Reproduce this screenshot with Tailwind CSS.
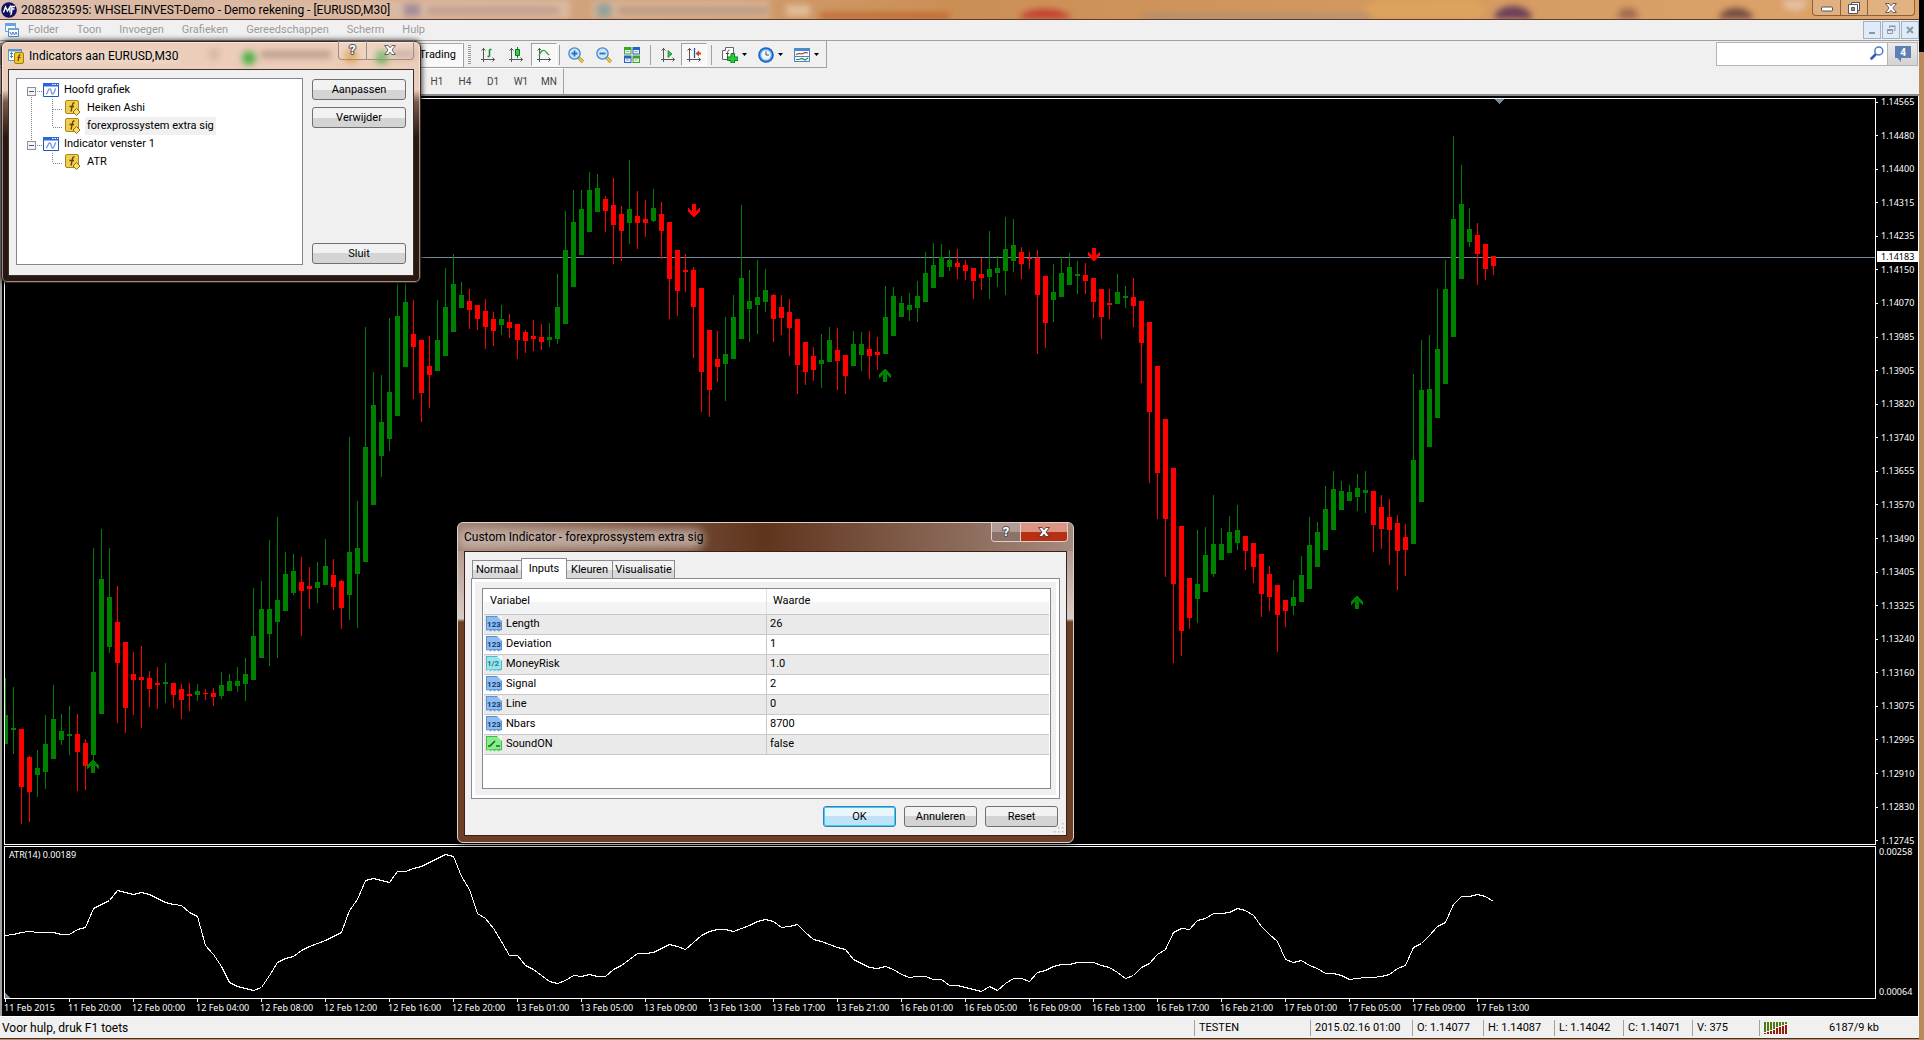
<!DOCTYPE html>
<html lang="nl">
<head>
    <meta charset="UTF-8">
    <meta name="viewport" content="width=device-width, initial-scale=1.0">
    <title>2088523595: WHSELFINVEST-Demo - Demo rekening - [EURUSD,M30]</title>
    <script src="https://cdn.jsdelivr.net/npm/@tailwindcss/browser@4"></script>
</head>
<body class="relative h-screen overflow-hidden flex bg-[#b98a5c] font-['Roboto',sans-serif] text-[11px] leading-4 text-black">

    <!-- Main window -->
    <div class="flex-1 min-w-0 flex flex-col bg-[#f0f0f0]">

        <!-- Title bar -->
        <header class="relative h-5 shrink-0 flex items-center justify-between overflow-hidden border-b border-[#5e3a30] bg-linear-to-r from-[#dcc0b0] via-[#cb8f55] to-[#dda56c]">
            <svg class="absolute inset-0 w-full h-full blur-[3px]" aria-hidden="true">
                <rect x="200" y="-2" width="370" height="26" fill="#dbb9a3" />
                <rect x="592" y="-2" width="178" height="26" fill="#d8b496" />
                <rect x="404" y="4" width="16" height="12" fill="#a08c98" />
                <rect x="427" y="7" width="132" height="7" fill="#c09c8a" />
                <rect x="597" y="4" width="14" height="13" fill="#8fa09c" />
                <rect x="618" y="7" width="150" height="7" fill="#bb9880" />
                <rect x="786" y="5" width="24" height="11" fill="#e2bd98" />
                <rect x="820" y="13" width="130" height="8" fill="#c0662c" />
                <ellipse cx="1045" cy="20" rx="26" ry="11" fill="#c33f30" />
                <rect x="1142" y="15" width="230" height="8" fill="#a58c7c" />
                <ellipse cx="1425" cy="10" rx="60" ry="16" fill="#e2aa5c" opacity=".6" />
                <ellipse cx="1513" cy="19" rx="19" ry="13" fill="#6a3f58" />
                <ellipse cx="1628" cy="16" rx="10" ry="8" fill="#a06a50" />
                <ellipse cx="1736" cy="19" rx="17" ry="11" fill="#744c44" />
                <ellipse cx="1795" cy="2" rx="12" ry="9" fill="#e6c0a6" />
            </svg>
            <div class="relative flex items-center gap-1 pl-px">
                <svg class="size-4" viewBox="0 0 16 16">
                    <circle cx="8" cy="8" r="7.8" fill="#10105e" />
                    <path d="M2.5 10.5L4.5 5l2 4 2.500-4v5.500M9.500 4.500h4.500M11 7h2.500M11 4.500c-.5 3 .5 6-1.500 8.500" fill="none" stroke="#fff" stroke-width="1.400" />
                </svg>
                <h1 class="text-[12px] leading-4">2088523595: WHSELFINVEST-Demo - Demo rekening - [EURUSD,M30]</h1>
            </div>
            <div class="relative flex self-start mr-1 h-4 rounded-b border border-t-0 border-[#8f6038] bg-white/15 divide-x divide-[#8f6038]">
                <button type="button" aria-label="Minimaliseren" class="w-7 flex items-center justify-center">
                    <svg class="w-3 h-3" viewBox="0 0 12 12"><rect x=".5" y="5" width="11" height="4" rx="1" fill="#fff" stroke="#54545c" /></svg>
                </button>
                <button type="button" aria-label="Vorig formaat" class="w-[27px] flex items-center justify-center">
                    <svg class="w-3 h-3" viewBox="0 0 12 12"><path d="M3.500 .5h8v8h-8z" fill="#fff" stroke="#54545c" /><path d="M.5 2.500h9v9h-9z" fill="#fff" stroke="#54545c" /><path d="M3.500 5.500h3v3h-3z" fill="#c98f5c" stroke="#54545c" /></svg>
                </button>
                <button type="button" aria-label="Sluiten" class="w-[46px] flex items-center justify-center">
                    <svg class="w-3 h-3" viewBox="0 0 12 12"><path d="M.6 1.500h3.600L6 3.800l1.800-2.300h3.600L8 6l3.400 4.500H7.800L6 8.200l-1.800 2.300H.6L4 6z" fill="#fff" stroke="#54545c" stroke-width=".9" /></svg>
                </button>
            </div>
        </header>

        <!-- Menu bar -->
        <nav class="h-[21px] shrink-0 flex items-center justify-between border-b border-[#a0a0a0] text-[#9a9a9a]">
            <div class="flex items-center gap-[18px] pl-[5px]">
                <svg class="w-3.5 h-3.5 -mr-[9px]" viewBox="0 0 14 14">
                    <path d="M.5 .5h10v8h-10z" fill="#fff" stroke="#6aa2dc" /><path d="M0 0h11v3H0z" fill="#6aa2dc" />
                    <path d="M3.500 5.500h10v8h-10z" fill="#fff" stroke="#4a8cd4" /><path d="M3 5h11v2H3z" fill="#6aa2dc" />
                    <path d="M5 9l1.500 3L8 9l1.500 3L11 9l1 2.500" fill="none" stroke="#4a78c8" />
                </svg>
                <a href="#">Folder</a>
                <a href="#">Toon</a>
                <a href="#">Invoegen</a>
                <a href="#">Grafieken</a>
                <a href="#">Gereedschappen</a>
                <a href="#">Scherm</a>
                <a href="#">Hulp</a>
            </div>
            <div class="flex gap-px">
                <button type="button" aria-label="Venster minimaliseren" class="size-[18px] flex items-center justify-center border border-[#9fb1c4] bg-[#dfebf7]">
                    <svg class="size-3" viewBox="0 0 12 12"><path d="M3 9h6" stroke="#8b98a8" stroke-width="2" /></svg>
                </button>
                <button type="button" aria-label="Venster herstellen" class="size-[18px] flex items-center justify-center border border-[#9fb1c4] bg-[#dfebf7]">
                    <svg class="size-3" viewBox="0 0 12 12" fill="none" stroke="#8b98a8"><path d="M2.500 6.500h5v3h-5zM2 5.500h6M4.500 4V2.500h5.500v4H8.500M4 2h6.500" /></svg>
                </button>
                <button type="button" aria-label="Venster sluiten" class="size-[18px] flex items-center justify-center border border-[#9fb1c4] bg-[#dfebf7]">
                    <svg class="size-3" viewBox="0 0 12 12"><path d="M3 3l6 6M9 3l-6 6" stroke="#8b98a8" stroke-width="2" /></svg>
                </button>
            </div>
        </nav>

        <!-- Toolbars -->
        <div class="shrink-0 flex justify-between items-start border-b-2 border-[#8c8c8c]">
            <div class="flex flex-col items-start">
                <div class="h-[27px] pt-px flex items-center border-r border-b border-[#a0a0a0] pr-0.5">
                    <button type="button" class="w-[463px] h-[23px] border border-[#a8a8a8] border-b-white border-r-white bg-[#f8f8f8] text-right pr-1.5">AutoTrading</button>
                    <span class="w-px h-6 bg-[#a0a0a0]"></span>
                    <span class="ml-1 w-[3px] h-5 bg-[repeating-linear-gradient(#9a9a9a_0_1px,#f0f0f0_1px_2px)]"></span>
                    <button type="button" aria-label="Staafgrafiek" class="ml-1 size-[26px] flex items-center justify-center">
                        <svg class="size-4" viewBox="0 0 16 16" fill="none"><path d="M3.500 1v14M1 12.500h14M1.500 3.500l2-2 2 2M12.500 10.500l2 2-2 2" stroke="#555" /><path d="M7.500 9.500h2M9.500 9.500v-7M9.500 2.500h2" stroke="#12902c" stroke-width="1.500" /></svg>
                    </button>
                    <button type="button" aria-label="Kaarsgrafiek" class="size-[26px] ml-0.5 flex items-center justify-center">
                        <svg class="size-4" viewBox="0 0 16 16" fill="none"><path d="M3.500 1v14M1 12.500h14M1.500 3.500l2-2 2 2M12.500 10.500l2 2-2 2" stroke="#555" /><path d="M9.500 0v11" stroke="#0b7a20" /><path d="M7.500 2.500h4v6h-4z" fill="#2fd048" stroke="#0b7a20" /></svg>
                    </button>
                    <button type="button" aria-label="Lijngrafiek" class="w-[26px] h-[23px] ml-0.5 flex items-center justify-center border border-[#a0a0a0] border-r-white border-b-white bg-[#f8f8f8]">
                        <svg class="size-4" viewBox="0 0 16 16" fill="none"><path d="M3.500 1v14M1 12.500h14M1.500 3.500l2-2 2 2M12.500 10.500l2 2-2 2" stroke="#555" /><path d="M3 9c2-6 5-7 7-4l3 3" stroke="#2fa33c" stroke-width="1.200" /></svg>
                    </button>
                    <span class="mx-0.5 w-px h-5 bg-[#a0a0a0]"></span>
                    <button type="button" aria-label="Inzoomen" class="w-7 h-[26px] flex items-center justify-center">
                        <svg class="size-4" viewBox="0 0 16 16" fill="none"><path d="M10 10l5 5" stroke="#b98b14" stroke-width="3.200" /><path d="M10 10l5 5" stroke="#f4d552" stroke-width="1.600" /><circle cx="6.500" cy="6.500" r="5.600" fill="#cbe6fa" stroke="#3f86cc" stroke-width="1.300" /><path d="M3.500 6.500h6M6.500 3.500v6" stroke="#2f6fb8" stroke-width="1.800" /></svg>
                    </button>
                    <button type="button" aria-label="Uitzoomen" class="w-7 h-[26px] flex items-center justify-center">
                        <svg class="size-4" viewBox="0 0 16 16" fill="none"><path d="M10 10l5 5" stroke="#b98b14" stroke-width="3.200" /><path d="M10 10l5 5" stroke="#f4d552" stroke-width="1.600" /><circle cx="6.500" cy="6.500" r="5.600" fill="#cbe6fa" stroke="#3f86cc" stroke-width="1.300" /><path d="M3.500 6.500h6" stroke="#2f6fb8" stroke-width="1.800" /></svg>
                    </button>
                    <button type="button" aria-label="Vensters naast elkaar" class="w-7 h-[26px] flex items-center justify-center">
                        <svg class="size-4" viewBox="0 0 16 16"><path d="M0 0h7.500v7.500H0zM8.500 8.500H16V16H8.500z" fill="#3fa32a" /><path d="M8.500 0H16v7.500H8.500zM0 8.500h7.500V16H0z" fill="#2a62c8" /><path d="M1 3h5.500v3.500H1zM9.500 3H15v3.500H9.500zM1 11.500h5.500V15H1zM9.500 11.500H15V15H9.500z" fill="#e8f2e4" /><path d="M2 4.500h3M10.500 4.500h3M2 13h3M10.500 13h3" stroke="#8ab0d0" /></svg>
                    </button>
                    <span class="ml-1 w-px h-5 bg-[#a0a0a0]"></span>
                    <button type="button" aria-label="Automatisch scrollen" class="ml-1 size-[26px] flex items-center justify-center">
                        <svg class="size-4" viewBox="0 0 16 16" fill="none"><path d="M3.500 1v14M1 12.500h14M1.500 3.500l2-2 2 2M12.500 10.500l2 2-2 2" stroke="#555" /><path d="M8 3.500v7l4-3.500z" fill="#2fc048" stroke="#0b7a20" stroke-width=".7" /></svg>
                    </button>
                    <button type="button" aria-label="Grafiek verschuiven" class="w-[26px] h-[23px] flex items-center justify-center border border-[#a0a0a0] border-r-white border-b-white bg-[#f8f8f8]">
                        <svg class="size-4" viewBox="0 0 16 16" fill="none"><path d="M3.500 1v14M1 12.500h14M1.500 3.500l2-2 2 2M12.500 10.500l2 2-2 2" stroke="#555" /><path d="M8.500 1v10" stroke="#2458b0" stroke-width="1.300" /><path d="M9.500 6.500l3.500-3v2h2v2h-2v2z" fill="#d04018" /></svg>
                    </button>
                    <span class="mx-1 w-px h-5 bg-[#a0a0a0]"></span>
                    <button type="button" aria-label="Indicatoren" class="w-9 h-[26px] flex items-center justify-center gap-1">
                        <svg class="size-4 shrink-0" viewBox="0 0 16 16"><path d="M.5 3.500h3v-3h8v12h-11z" fill="#fff" stroke="#666" /><path d="M7.500 3C5.500 3 5.500 5 5.500 10M4 6.500h3" fill="none" stroke="#444" /><path d="M9 6.500h3.500V10H16v3.500h-3.500V16H9v-2.500H5.500V10H9z" fill="#26d03a" stroke="#0a7c1c" /></svg>
                        <svg class="w-[5px] h-[3px] shrink-0" viewBox="0 0 5 3"><path d="M0 0h5L2.500 3z" /></svg>
                    </button>
                    <button type="button" aria-label="Perioden" class="w-9 h-[26px] flex items-center justify-center gap-1">
                        <svg class="size-4 shrink-0" viewBox="0 0 16 16"><circle cx="8" cy="8" r="7.800" fill="#1864c0" /><circle cx="8" cy="8" r="6.200" fill="#58a8ee" /><circle cx="8" cy="8" r="4.800" fill="#f2f6fa" /><path d="M8 4.500V8h3" fill="none" stroke="#444" /></svg>
                        <svg class="w-[5px] h-[3px] shrink-0" viewBox="0 0 5 3"><path d="M0 0h5L2.500 3z" /></svg>
                    </button>
                    <button type="button" aria-label="Sjablonen" class="w-9 h-[26px] flex items-center justify-center gap-1">
                        <svg class="size-4 shrink-0" viewBox="0 0 16 16"><path d="M.5 1.500h15v13H.5z" fill="#f4fafe" stroke="#4a84c0" /><path d="M0 1h16v3H0z" fill="#4a8ad0" /><path d="M1 9.500h14" stroke="#4a84c0" /><path d="M2 7.500l3-1 3 .5 3-1.500 3 .5" fill="none" stroke="#b03020" stroke-width="1.200" /><path d="M2 12.500h3l3-1 3 1.500 3-2" fill="none" stroke="#2a9038" stroke-width="1.200" /></svg>
                        <svg class="w-[5px] h-[3px] shrink-0" viewBox="0 0 5 3"><path d="M0 0h5L2.500 3z" /></svg>
                    </button>
                </div>
                <div class="h-[26px] flex items-center border-t border-white border-r border-r-[#a0a0a0] pl-[423px] text-[10px] text-[#444]">
                    <button type="button" class="w-7">H1</button>
                    <button type="button" class="w-7">H4</button>
                    <button type="button" class="w-7">D1</button>
                    <button type="button" class="w-7">W1</button>
                    <button type="button" class="w-7">MN</button>
                </div>
            </div>
            <div class="flex mt-px mr-px">
                <label class="relative flex">
                    <input type="text" aria-label="Zoeken" class="w-[172px] h-6 border border-[#b4b4b4] bg-white pl-1 pr-8 outline-none">
                    <svg class="absolute right-1 top-1 size-3.5" viewBox="0 0 14 14" fill="none"><path d="M6 8l-4.500 4.500" stroke="#2a5cc0" stroke-width="2.600" stroke-linecap="round" /><circle cx="8.800" cy="5" r="4" fill="#fff" stroke="#4a78cc" stroke-width="1.500" /></svg>
                </label>
                <button type="button" aria-label="4 berichten" class="w-[30px] h-6 flex items-center justify-center border border-l-0 border-[#b4b4b4] bg-linear-to-b from-[#ececec] to-[#d2d2d2]">
                    <svg class="w-4 h-4" viewBox="0 0 16 16"><path d="M0 0h16v12H6v4l-3.500-4H0z" fill="#5f7fb4" /><text x="8" y="10" font-size="10" font-weight="700" fill="#fff" text-anchor="middle">4</text></svg>
                </button>
            </div>
        </div>

        <!-- Chart -->
        <main class="flex-1 min-h-0 flex border-l-2 border-[#a0a0a0] border-r border-r-white bg-black font-['Noto_Sans',sans-serif] text-[9px] leading-3 text-white">
            <div class="flex-1 min-w-0 flex flex-col pl-0.5 pt-0.5">
                <div class="flex-1 min-h-0 flex">
                    <div class="flex-1 min-w-0 border border-white">
                        <svg id="priceChart" class="block w-full h-full" shape-rendering="crispEdges"></svg>
                    </div>
                    <div class="relative w-[42px] flex flex-col">
                        <ul id="priceScale" class="flex-1 -my-0.5 flex flex-col justify-between"></ul>
                        <span class="absolute left-px right-0 top-[153px] bg-white text-black pl-1 leading-[11px]">1.14183</span>
                    </div>
                </div>
                <div class="h-[153px] mt-px shrink-0 flex">
                    <div class="relative flex-1 min-w-0 border border-white">
                        <svg id="atrChart" class="block w-full h-full" shape-rendering="crispEdges"></svg>
                        <span class="absolute left-1 top-0.5">ATR(14) 0.00189</span>
                    </div>
                    <div class="w-[42px] pl-[3px] flex flex-col justify-between pb-px">
                        <span>0.00258</span>
                        <span>0.00064</span>
                    </div>
                </div>
                <ol id="timeScale" class="h-[17px] shrink-0 flex whitespace-nowrap"></ol>
            </div>
        </main>

        <!-- Status bar -->
        <footer class="h-[22px] shrink-0 flex items-center border-t border-white">
            <span class="flex-1 pl-0.5 text-[12px]">Voor hulp, druk F1 toets</span>
            <span class="w-[116px] pl-1 border-l border-[#a0a0a0]">TESTEN</span>
            <span class="w-[102px] pl-1 border-l border-[#a0a0a0]">2015.02.16 01:00</span>
            <span class="w-[71px] pl-1 border-l border-[#a0a0a0]">O: 1.14077</span>
            <span class="w-[71px] pl-1 border-l border-[#a0a0a0]">H: 1.14087</span>
            <span class="w-[69px] pl-1 border-l border-[#a0a0a0]">L: 1.14042</span>
            <span class="w-[69px] pl-1 border-l border-[#a0a0a0]">C: 1.14071</span>
            <span class="w-[67px] pl-1 border-l border-[#a0a0a0]">V: 375</span>
            <span class="w-[160px] pl-1 pr-10 border-l border-[#a0a0a0] flex items-center justify-between">
                <svg class="w-6 h-3" viewBox="0 0 24 12" shape-rendering="crispEdges">
                    <path d="M1 0v10M4 0v9M7 0v8M10 0v7M13 0v5M16 0v4M19 0v3M22 0v2" stroke="#4f7a12" stroke-width="2" />
                    <path d="M1 11v1M4 10v2M7 9v3M10 8v4M13 6v6M16 5v7M19 4v8M22 3v9" stroke="#9a1c10" stroke-width="2" />
                </svg>
                6187/9 kb
            </span>
        </footer>
        <div class="h-0.5 shrink-0 border-t border-[#4a3020] bg-[#b89070]"></div>
    </div>

    <!-- Desktop behind the window -->
    <div class="w-[5px] shrink-0 bg-linear-to-b from-black from-5% to-[#b98a5c] to-5%"></div>

    <!-- Indicator list -->
    <section class="absolute left-px top-[41px] w-[420px] h-[242px] p-1.5 pt-0 flex flex-col rounded-md border border-[#3a2620] bg-linear-to-b from-[#eccdb9] from-20% via-[#7a5a4a] via-25% to-[#2a1810] to-40% shadow-[0_0_6px_#000,inset_0_0_0_1px_#ffffff80]">
        <div class="relative h-[27px] shrink-0 flex items-center gap-[5px]">
            <svg class="absolute inset-0 w-full h-full blur-[3px]" aria-hidden="true">
                <rect x="0" y="10" width="170" height="10" fill="#ecd9cc" />
                <circle cx="206" cy="12" r="6" fill="#d5b8a0" />
                <circle cx="241" cy="16" r="7" fill="#52b04a" />
                <rect x="253" y="9" width="70" height="7" fill="#b89c8c" />
                <circle cx="343" cy="14" r="7" fill="#dba24e" />
                <circle cx="374" cy="15" r="7" fill="#72b060" />
                <rect x="386" y="8" width="22" height="8" fill="#c3a798" />
            </svg>
            <svg class="relative size-4" viewBox="0 0 16 16"><path d="M.5 1.500h13v11H.5z" fill="#fff" stroke="#5a98cc" /><path d="M0 1h14v2.500H0z" fill="#5a98cc" /><path d="M2 5.500h3M2 8.500h3M3.500 4v6" stroke="#4a88a8" /><rect x="6.500" y="4.500" width="9" height="11" rx="1.500" fill="#f0c62c" stroke="#a07c10" /><path d="M12.500 7c-2-.5-1.500 2-2.500 6M9.500 9.500h3" fill="none" stroke="#5a4408" stroke-width="1.200" /></svg>
            <h2 class="relative text-[12px]">Indicators aan EURUSD,M30</h2>
            <div class="absolute right-0 -top-px h-[19px] flex rounded-b border border-t-0 border-[#a08c80] divide-x divide-[#a08c80] bg-white/15">
                <button type="button" aria-label="Help" class="w-7 font-bold text-[13px] leading-4 text-white [-webkit-text-stroke:2px_#555560] [paint-order:stroke_fill]">?</button>
                <button type="button" aria-label="Sluiten" class="w-[46px] flex items-center justify-center">
                    <svg class="size-3" viewBox="0 0 12 12"><path d="M.6 1.500h3.600L6 3.800l1.800-2.300h3.600L8 6l3.400 4.500H7.800L6 8.200l-1.800 2.300H.6L4 6z" fill="#fff" stroke="#54545c" stroke-width=".9" /></svg>
                </button>
            </div>
        </div>
        <div class="flex-1 min-h-0 flex gap-[9px] px-[7px] pt-2 pb-2.5 border border-[#3a3030] bg-[#f0f0f0]">
            <ul class="w-[287px] shrink-0 border border-[#828790] bg-white pt-0.5 pl-2.5">
                <li class="h-[18px] flex items-center">
                    <svg class="w-4 h-[18px]" viewBox="0 0 16 18" shape-rendering="crispEdges"><path d="M.5 6.500h8v8h-8z" fill="#f4f4f4" stroke="#909090" /><path d="M2 10.500h5" stroke="#3a5ca8" /><path d="M10 10.500h6M4.500 16v2" stroke="#808080" stroke-dasharray="1 1" /></svg>
                    <svg class="w-4 h-3.5 mr-[5px]" viewBox="0 0 16 14"><path d="M.5 .5h15v13H.5z" fill="#fff" stroke="#1f56c4" /><path d="M0 0h16v3.500H0z" fill="#2a66dc" /><path d="M9 1.500h1.500M11.500 1.500h1.500M14 1.500h1" stroke="#fff" /><path d="M3 11c2 0 2-6 4-5s1 6 3 5 1.500-5 3-5.500" fill="none" stroke="#7898e0" stroke-width="1.400" /></svg>
                    Hoofd grafiek
                </li>
                <li class="h-[18px] flex items-center">
                    <svg class="w-[38px] h-[18px]" viewBox="0 0 38 18" shape-rendering="crispEdges" stroke="#808080" stroke-dasharray="1 1"><path d="M4.500 0v18M25.500 0v18M26 10.500h10" /></svg>
                    <svg class="size-4 mr-1" viewBox="0 0 16 16"><rect x=".5" y=".5" width="13" height="13" rx="1.500" fill="#f2ce4c" stroke="#a8861c" /><path d="M9.500 3C7 2.500 7.500 6 6 11.500M4.500 6.500h4.500" fill="none" stroke="#5a4408" stroke-width="1.300" /><path d="M11.500 8.500l3.500 3.500-3.500 3.500L8 12z" fill="#f8e070" stroke="#8c6c10" /></svg>
                    <span class="px-0.5">Heiken Ashi</span>
                </li>
                <li class="h-[18px] flex items-center">
                    <svg class="w-[38px] h-[18px]" viewBox="0 0 38 18" shape-rendering="crispEdges" stroke="#808080" stroke-dasharray="1 1"><path d="M4.500 0v18M25.500 0v10M26 10.500h10" /></svg>
                    <svg class="size-4 mr-1" viewBox="0 0 16 16"><rect x=".5" y=".5" width="13" height="13" rx="1.500" fill="#f2ce4c" stroke="#a8861c" /><path d="M9.500 3C7 2.500 7.500 6 6 11.500M4.500 6.500h4.500" fill="none" stroke="#5a4408" stroke-width="1.300" /><path d="M11.500 8.500l3.500 3.500-3.500 3.500L8 12z" fill="#f8e070" stroke="#8c6c10" /></svg>
                    <span class="px-0.5 leading-[18px] bg-[#f0f0f0]">forexprossystem extra sig</span>
                </li>
                <li class="h-[18px] flex items-center">
                    <svg class="w-4 h-[18px]" viewBox="0 0 16 18" shape-rendering="crispEdges"><path d="M4.500 0v5" stroke="#808080" stroke-dasharray="1 1" /><path d="M.5 6.500h8v8h-8z" fill="#f4f4f4" stroke="#909090" /><path d="M2 10.500h5" stroke="#3a5ca8" /><path d="M10 10.500h6" stroke="#808080" stroke-dasharray="1 1" /></svg>
                    <svg class="w-4 h-3.5 mr-[5px]" viewBox="0 0 16 14"><path d="M.5 .5h15v13H.5z" fill="#fff" stroke="#1f56c4" /><path d="M0 0h16v3.500H0z" fill="#2a66dc" /><path d="M9 1.500h1.500M11.500 1.500h1.500M14 1.500h1" stroke="#fff" /><path d="M3 11c2 0 2-6 4-5s1 6 3 5 1.500-5 3-5.500" fill="none" stroke="#7898e0" stroke-width="1.400" /></svg>
                    Indicator venster 1
                </li>
                <li class="h-[18px] flex items-center">
                    <svg class="w-[38px] h-[18px]" viewBox="0 0 38 18" shape-rendering="crispEdges" stroke="#808080" stroke-dasharray="1 1"><path d="M25.500 0v10M26 10.500h10" /></svg>
                    <svg class="size-4 mr-1" viewBox="0 0 16 16"><rect x=".5" y=".5" width="13" height="13" rx="1.500" fill="#f2ce4c" stroke="#a8861c" /><path d="M9.500 3C7 2.500 7.500 6 6 11.500M4.500 6.500h4.500" fill="none" stroke="#5a4408" stroke-width="1.300" /><path d="M11.500 8.500l3.500 3.500-3.500 3.500L8 12z" fill="#f8e070" stroke="#8c6c10" /></svg>
                    <span class="px-0.5">ATR</span>
                </li>
            </ul>
            <div class="flex-1 flex flex-col gap-[7px] py-px">
                <button type="button" class="h-[21px] rounded-[3px] border border-[#707070] bg-linear-to-b from-[#f2f2f2] from-50% to-[#d4d4d4] to-50% leading-[18px]">Aanpassen</button>
                <button type="button" class="h-[21px] rounded-[3px] border border-[#707070] bg-linear-to-b from-[#f2f2f2] from-50% to-[#d4d4d4] to-50% leading-[18px]">Verwijder</button>
                <button type="button" class="mt-auto h-[21px] rounded-[3px] border border-[#707070] bg-linear-to-b from-[#f2f2f2] from-50% to-[#d4d4d4] to-50% leading-[18px]">Sluit</button>
            </div>
        </div>
    </section>

    <!-- Indicator settings -->
    <section class="absolute left-[457px] top-[522px] w-[617px] h-[321px] p-1.5 pt-0 flex flex-col rounded-md border border-[#e0d0c8] bg-[#6b4128] bg-linear-to-b from-[#a5877a] via-[#d8ccc6] via-30% to-[#6b3f26] to-31% shadow-[0_0_10px_#000]">
        <div class="absolute inset-x-0 top-0 h-7 rounded-t-md bg-linear-to-r from-[#a08273] via-[#60351d] via-50% to-[#a58a7e] overflow-hidden">
            <div class="absolute left-0 top-1.5 w-[246px] h-5 rounded-full bg-[#cbbab0]/80 blur-[5px]"></div>
        </div>
        <div class="relative h-7 shrink-0 flex items-center">
            <h2 class="text-[12px]">Custom Indicator - forexprossystem extra sig</h2>
            <div class="absolute -right-px top-0 h-[19px] flex rounded-b border border-t-0 border-[#e0d0c8] divide-x divide-[#e0d0c8] overflow-hidden">
                <button type="button" aria-label="Help" class="w-[29px] bg-linear-to-b from-[#b09c94] from-50% to-[#8b736a] to-50% font-bold text-[13px] leading-4 text-white [-webkit-text-stroke:2px_#555560] [paint-order:stroke_fill]">?</button>
                <button type="button" aria-label="Sluiten" class="w-[46px] flex items-center justify-center bg-linear-to-b from-[#dc9484] from-50% to-[#b83014] to-50%">
                    <svg class="size-3" viewBox="0 0 12 12"><path d="M.6 1.500h3.600L6 3.800l1.800-2.300h3.600L8 6l3.400 4.500H7.800L6 8.200l-1.800 2.300H.6L4 6z" fill="#fff" stroke="#54343c" stroke-width=".9" /></svg>
                </button>
            </div>
        </div>
        <div class="relative flex-1 min-h-0 flex flex-col px-1.5 pt-1.5 pb-2 border border-[#3a2018] bg-[#f0f0f0]">
            <div role="tablist" class="relative flex items-end px-px -mb-px">
                <button type="button" role="tab" class="w-[50px] h-[19px] border border-[#898c95] bg-linear-to-b from-[#f2f2f2] from-50% to-[#d8d8d8] to-50% leading-4">Normaal</button>
                <button type="button" role="tab" aria-selected="true" class="w-[46px] h-[21px] -ml-px border border-b-0 border-[#898c95] bg-white leading-4">Inputs</button>
                <button type="button" role="tab" class="w-[47px] h-[19px] -ml-px border border-[#898c95] bg-linear-to-b from-[#f2f2f2] from-50% to-[#d8d8d8] to-50% leading-4">Kleuren</button>
                <button type="button" role="tab" class="w-[63px] h-[19px] -ml-px border border-[#898c95] bg-linear-to-b from-[#f2f2f2] from-50% to-[#d8d8d8] to-50% leading-4">Visualisatie</button>
            </div>
            <div role="tabpanel" class="flex-1 min-h-0 py-[9px] pl-2.5 pr-2 border border-[#898c95] bg-[#f0f0f0] shadow-[inset_0_0_0_3px_#fff]">
                <div class="h-full border border-[#828790] bg-white px-px">
                    <table class="w-full table-fixed border-collapse text-left">
                        <thead>
                            <tr class="h-[25px] bg-linear-to-b from-white from-50% to-[#f3f4f6] to-50%">
                                <th class="w-1/2 pl-1.5 font-normal border-r border-[#e0e0e0] border-b border-b-[#c8c8c8]">Variabel</th>
                                <th class="pl-1.5 font-normal border-b border-[#c8c8c8]">Waarde</th>
                            </tr>
                        </thead>
                        <tbody id="inputs"></tbody>
                    </table>
                </div>
            </div>
            <div class="mt-[7px] pr-0.5 flex justify-end gap-2">
                <button type="button" class="w-[73px] h-[21px] rounded-[3px] border border-[#3c7fb1] bg-linear-to-b from-[#e9f6fd] from-50% to-[#bfe3f5] to-50% leading-[18px] shadow-[inset_0_0_0_1px_#35d0f8]">OK</button>
                <button type="button" class="w-[73px] h-[21px] rounded-[3px] border border-[#707070] bg-linear-to-b from-[#f2f2f2] from-50% to-[#d4d4d4] to-50% leading-[18px]">Annuleren</button>
                <button type="button" class="w-[73px] h-[21px] rounded-[3px] border border-[#707070] bg-linear-to-b from-[#f2f2f2] from-50% to-[#d4d4d4] to-50% leading-[18px]">Reset</button>
            </div>
            <svg class="absolute right-0.5 bottom-0.5 size-2.5" viewBox="0 0 10 10" fill="#c0c0c0"><path d="M8 0h1.500v1.500H8zM8 4h1.500v1.500H8zM4 4h1.500v1.500H4zM8 8h1.500v1.500H8zM4 8h1.500v1.500H4zM0 8h1.500v1.500H0z" /></svg>
        </div>
    </section>

    <script>
        // direction, high, body top, body bottom, low
        const candles = `
            G 678 715 744 744|G 687 728 730 754|R 729 729 787 824|R 756 757 792 822|G 750 768 775 797|G 715 744 772 789|G 685 719 759 759|G 714 731 740 745
            G 706 734 736 755|R 714 734 752 791|R 739 743 766 790|G 548 672 755 760|G 529 579 714 714|G 548 597 647 653|R 586 622 663 723|R 642 642 708 733
            R 652 674 680 715|R 646 677 680 728|R 671 678 689 707|R 667 683 685 709|G 663 682 684 703|R 683 683 695 708|R 684 689 700 719|R 683 694 696 711
            G 684 691 695 701|R 689 693 694 700|R 688 693 697 706|G 672 685 696 699|G 674 681 691 691|G 667 681 686 692|G 658 674 684 701|G 588 636 680 680
            G 581 609 658 658|G 540 609 634 666|G 517 600 622 658|G 552 574 611 611|G 554 571 593 595|R 557 582 591 636|R 567 586 589 609|G 562 582 588 603
            G 539 566 585 585|R 559 575 587 610|R 580 581 608 629|G 437 552 595 620|G 501 548 574 628|G 327 447 562 562|G 372 405 505 505|G 375 422 456 477
            G 318 392 439 451|G 250 316 416 416|G 270 302 367 367|R 300 334 347 399|R 340 340 393 422|R 336 366 375 408|G 300 340 371 371|G 268 307 356 356
            G 254 284 332 332|G 282 295 308 308|R 289 301 310 329|R 305 305 319 330|R 299 311 327 349|R 312 319 331 346|G 305 319 325 335|R 314 322 328 338
            R 324 324 340 359|R 330 332 341 353|R 320 336 339 351|R 324 337 342 350|G 323 337 340 347|G 274 307 339 344|G 211 250 324 324|G 190 222 287 287
            G 190 209 255 255|G 172 190 232 232|G 174 188 212 212|R 196 199 211 232|R 178 205 225 264|R 206 214 231 261|G 160 209 223 244|R 191 216 223 249
            R 200 219 223 237|G 189 208 221 222|R 202 214 231 259|R 222 222 279 319|R 250 250 291 316|R 254 270 272 292|R 267 270 307 358|R 288 288 372 412
            R 330 330 390 417|R 331 359 367 382|G 317 354 364 401|G 295 317 359 359|G 205 278 339 339|G 270 301 309 342|G 260 297 305 334|G 269 290 302 312
            R 294 295 319 342|R 295 307 318 335|R 299 312 328 356|R 319 319 365 394|R 342 342 372 385|R 347 356 370 381|G 334 360 364 388|G 327 340 362 362
            R 328 350 361 390|R 355 355 376 394|G 331 344 366 366|G 332 344 355 371|R 331 349 356 379|R 337 352 355 370|G 286 317 354 354|G 287 296 336 336
            G 296 303 317 317|G 293 305 310 321|G 281 296 308 322|G 252 273 302 302|G 243 265 288 288|G 244 257 277 277|G 250 260 267 271|R 249 263 267 279
            R 260 265 271 280|R 268 268 281 299|R 258 274 278 290|G 231 269 277 299|G 256 268 273 287|G 217 249 271 295|G 219 245 261 272|R 247 252 264 279
            R 252 258 259 269|R 250 258 295 354|R 276 276 323 348|G 264 292 300 322|G 257 273 297 297|G 253 267 285 285|G 261 274 276 294|R 263 275 281 294
            R 278 278 302 318|R 289 289 317 339|R 289 303 305 319|G 274 292 304 304|G 286 296 298 308|R 278 297 306 327|R 301 301 343 383|R 322 322 412 483
            R 366 366 473 519|R 419 419 519 577|R 468 468 584 663|R 526 526 631 656|R 578 578 618 629|G 530 584 599 623|G 527 555 592 592|G 495 544 574 577
            G 528 544 560 560|G 516 532 553 553|G 505 530 543 550|R 536 536 551 570|R 543 543 567 583|R 554 554 594 617|R 566 574 597 611|R 585 585 615 652
            R 600 600 611 627|G 580 597 606 615|G 556 575 602 602|G 517 545 589 589|G 522 532 567 567|G 486 509 550 550|G 471 489 530 530|G 481 491 510 510
            G 485 492 501 501|G 474 488 497 511|G 471 490 493 513|R 491 491 525 552|R 495 507 529 549|R 499 517 530 565|R 515 523 551 590|R 524 537 550 576
            G 374 460 544 544|G 340 390 502 502|G 335 389 447 447|G 289 349 418 418|G 260 289 384 384|G 136 219 337 337|G 165 204 279 279|G 208 229 242 247
            R 223 235 254 285|R 244 244 269 280|R 256 256 266 275`.trim().split(/\||\n/).map(row => row.trim().split(' '));

        const signals = [
            { x: 87, y: 759, up: true },
            { x: 879, y: 368, up: true },
            { x: 1351, y: 595, up: true },
            { x: 688, y: 204, up: false },
            { x: 1088, y: 248, up: false },
        ];

        // one value per candle
        const atr = [
            935, 934, 932, 931, 932, 932, 932, 934, 934, 929, 927, 908, 904, 900, 890, 892, 894, 892, 894, 898,
            902, 904, 905, 912, 916, 945, 954, 966, 982, 986, 988, 990, 987, 975, 962, 958, 956, 950, 946, 943,
            940, 936, 932, 910, 899, 880, 878, 880, 882, 871, 871, 868, 866, 862, 858, 854, 856, 876, 889, 913,
            918, 928, 941, 955, 955, 965, 969, 975, 981, 983, 980, 975, 976, 974, 976, 976, 969, 965, 959, 953,
            953, 952, 948, 944, 946, 949, 942, 935, 931, 929, 929, 931, 928, 925, 921, 919, 921, 927, 926, 924,
            932, 939, 941, 944, 947, 949, 959, 963, 967, 968, 966, 969, 974, 977, 976, 976, 979, 979, 985, 985,
            987, 989, 991, 986, 990, 983, 978, 978, 981, 972, 970, 966, 964, 964, 962, 962, 962, 965, 967, 972,
            978, 975, 967, 963, 954, 949, 932, 928, 929, 920, 918, 913, 913, 912, 908, 910, 915, 926, 934, 941,
            959, 962, 960, 965, 968, 973, 973, 975, 979, 978, 977, 977, 976, 974, 968, 965, 947, 943, 935, 926,
            922, 904, 896, 896, 894, 896, 901,
        ];

        function drawPrices() {
            let out = '<g transform="translate(-5,-99)">';
            out += '<path d="M5 257.5H4000" stroke="#778899" />';
            candles.forEach(([dir, high, top, bottom, low], i) => {
                const x = 5 + 8 * i;
                const color = dir === 'G' ? '#008000' : '#ff0000';
                out += `<rect x="${x}" y="${high}" width="1" height="${low - high}" fill="${color}" />`;
                out += `<rect x="${x - 2}" y="${top}" width="5" height="${bottom - top}" fill="${color}" />`;
            });
            signals.forEach(({ x, y, up }) => {
                const shape = up
                    ? 'M6 0L12 6.500V10L8 6.500V14H4V6.500L0 10V6.500z'
                    : 'M6 14L12 7.500V4L8 7.500V0H4V7.500L0 4V7.500z';
                out += `<path transform="translate(${x},${y})" d="${shape}" fill="${up ? '#008000' : '#ff0000'}" />`;
            });
            out += '<path d="M1494 99h10l-5 5z" fill="#778899" /></g>';
            document.getElementById('priceChart').innerHTML = out;
        }

        function drawAtr() {
            const points = atr.map((y, i) => `${5.5 + 8 * i},${y}.5`).join(' ');
            document.getElementById('atrChart').innerHTML =
                `<g transform="translate(-5,-847)"><polyline points="${points}" fill="none" stroke="#fff" />` +
                '<path d="M5 992v6h5z" fill="#778899" /></g>';
        }

        function drawScales() {
            const prices = ['1.14565', '1.14480', '1.14400', '1.14315', '1.14235', '1.14150', '1.14070', '1.13985',
                '1.13905', '1.13820', '1.13740', '1.13655', '1.13570', '1.13490', '1.13405', '1.13325', '1.13240',
                '1.13160', '1.13075', '1.12995', '1.12910', '1.12830', '1.12745'];
            document.getElementById('priceScale').innerHTML = prices.map(price =>
                `<li class="flex items-center gap-[3px]"><span class="w-0.5 h-px bg-white"></span>${price}</li>`
            ).join('');

            const times = ['11 Feb 2015', '11 Feb 20:00', '12 Feb 00:00', '12 Feb 04:00', '12 Feb 08:00', '12 Feb 12:00',
                '12 Feb 16:00', '12 Feb 20:00', '13 Feb 01:00', '13 Feb 05:00', '13 Feb 09:00', '13 Feb 13:00',
                '13 Feb 17:00', '13 Feb 21:00', '16 Feb 01:00', '16 Feb 05:00', '16 Feb 09:00', '16 Feb 13:00',
                '16 Feb 17:00', '16 Feb 21:00', '17 Feb 01:00', '17 Feb 05:00', '17 Feb 09:00', '17 Feb 13:00'];
            document.getElementById('timeScale').innerHTML = times.map(time =>
                `<li class="w-16 shrink-0"><span class="block ml-px w-px h-[3px] bg-white"></span>${time}</li>`
            ).join('');
        }

        function fillInputs() {
            const icons = {
                int: `<rect x=".5" y=".5" width="15" height="13" fill="#8fbdf0" stroke="#5c92cc" /><path d="M.5 13v2l2-1 2 1.500 2-1.500 2 1.500 2-1.500 2 1.500 3-1.500z" fill="#6ea2dc" /><path d="M11 0h5v5z" fill="#f4faff" /><text x="8" y="11" font-size="8" font-weight="700" fill="#123a70" text-anchor="middle">123</text>`,
                double: `<rect x=".5" y=".5" width="15" height="13" fill="#9ce4ec" stroke="#54b8c4" /><path d="M.5 13v2l2-1 2 1.500 2-1.500 2 1.500 2-1.500 2 1.500 3-1.500z" fill="#7ed4de" /><path d="M11 0h5v5z" fill="#f4ffff" /><text x="7" y="10" font-size="8" font-weight="700" fill="#1c7c88" text-anchor="middle">1/2</text>`,
                bool: `<rect x=".5" y=".5" width="15" height="13" fill="#8cec8c" stroke="#44b84c" /><path d="M.5 13v2l2-1 2 1.500 2-1.500 2 1.500 2-1.500 2 1.500 3-1.500z" fill="#6cdc70" /><path d="M11 0h5v5z" fill="#f4fff4" /><path d="M2 10h2l5-5M10 10h4" fill="none" stroke="#0c6c1c" stroke-width="1.600" />`,
            };
            const inputs = [
                ['int', 'Length', '26'],
                ['int', 'Deviation', '1'],
                ['double', 'MoneyRisk', '1.0'],
                ['int', 'Signal', '2'],
                ['int', 'Line', '0'],
                ['int', 'Nbars', '8700'],
                ['bool', 'SoundON', 'false'],
            ];
            document.getElementById('inputs').innerHTML = inputs.map(([type, name, value]) => `
                <tr class="h-5 odd:bg-[#eaeaea] border-b border-[#c8c8c8]">
                    <td class="border-r border-[#c8c8c8]">
                        <div class="flex items-center gap-1 pl-0.5">
                            <svg class="size-4" viewBox="0 0 16 16">${icons[type]}</svg>${name}
                        </div>
                    </td>
                    <td class="pl-[3px]">${value}</td>
                </tr>
            `).join('');
        }

        drawPrices();
        drawAtr();
        drawScales();
        fillInputs();
    </script>
</body>
</html>
